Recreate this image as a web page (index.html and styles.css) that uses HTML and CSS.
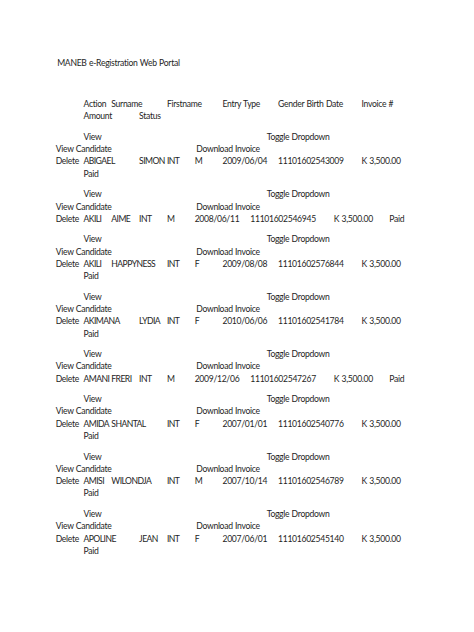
FILE: index.html
```html
<!DOCTYPE html>
<html lang="en">
<head>
<meta charset="utf-8">
<title>MANEB e-Registration Web Portal</title>
<link rel="stylesheet" href="styles.css">
</head>
<body>
<main class="doc">
  <p class="title">MANEB e-Registration Web Portal</p>

  <div class="block header">
    <div class="line"><span class="t1">Action</span><span class="t2">Surname</span><span class="t4">Firstname</span><span class="t6">Entry Type</span><span class="t8">Gender Birth Date</span><span class="t11">Invoice #</span></div>
    <div class="line"><span class="t1">Amount</span><span class="t3">Status</span></div>
  </div>

  <div class="block record">
    <div class="line"><span class="t1">View</span><span class="toggle">Toggle Dropdown</span></div>
    <div class="line"><span class="t0">View Candidate</span><span class="download">Download Invoice</span></div>
    <div class="line"><span class="t0">Delete</span><span class="t1 caps">ABIGAEL</span><span class="t3 caps">SIMON</span><span class="t4 caps">INT</span><span class="t5">M</span><span class="t6">2009/06/04</span><span class="t8">11101602543009</span><span class="t11">K 3,500.00</span></div>
    <div class="line"><span class="t1">Paid</span></div>
  </div>

  <div class="block record">
    <div class="line"><span class="t1">View</span><span class="toggle">Toggle Dropdown</span></div>
    <div class="line"><span class="t0">View Candidate</span><span class="download">Download Invoice</span></div>
    <div class="line"><span class="t0">Delete</span><span class="t1 caps">AKILI</span><span class="t2 caps">AIME</span><span class="t3 caps">INT</span><span class="t4">M</span><span class="t5">2008/06/11</span><span class="t7">11101602546945</span><span class="t10">K 3,500.00</span><span class="t12">Paid</span></div>
  </div>

  <div class="block record">
    <div class="line"><span class="t1">View</span><span class="toggle">Toggle Dropdown</span></div>
    <div class="line"><span class="t0">View Candidate</span><span class="download">Download Invoice</span></div>
    <div class="line"><span class="t0">Delete</span><span class="t1 caps">AKILI</span><span class="t2 caps">HAPPYNESS</span><span class="t4 caps">INT</span><span class="t5">F</span><span class="t6">2009/08/08</span><span class="t8">11101602576844</span><span class="t11">K 3,500.00</span></div>
    <div class="line"><span class="t1">Paid</span></div>
  </div>

  <div class="block record">
    <div class="line"><span class="t1">View</span><span class="toggle">Toggle Dropdown</span></div>
    <div class="line"><span class="t0">View Candidate</span><span class="download">Download Invoice</span></div>
    <div class="line"><span class="t0">Delete</span><span class="t1 caps">AKIMANA</span><span class="t3 caps">LYDIA</span><span class="t4 caps">INT</span><span class="t5">F</span><span class="t6">2010/06/06</span><span class="t8">11101602541784</span><span class="t11">K 3,500.00</span></div>
    <div class="line"><span class="t1">Paid</span></div>
  </div>

  <div class="block record">
    <div class="line"><span class="t1">View</span><span class="toggle">Toggle Dropdown</span></div>
    <div class="line"><span class="t0">View Candidate</span><span class="download">Download Invoice</span></div>
    <div class="line"><span class="t0">Delete</span><span class="t1 caps">AMANI</span><span class="t2 caps">FRERI</span><span class="t3 caps">INT</span><span class="t4">M</span><span class="t5">2009/12/06</span><span class="t7">11101602547267</span><span class="t10">K 3,500.00</span><span class="t12">Paid</span></div>
  </div>

  <div class="block record">
    <div class="line"><span class="t1">View</span><span class="toggle">Toggle Dropdown</span></div>
    <div class="line"><span class="t0">View Candidate</span><span class="download">Download Invoice</span></div>
    <div class="line"><span class="t0">Delete</span><span class="t1 caps">AMIDA</span><span class="t2 caps">SHANTAL</span><span class="t4 caps">INT</span><span class="t5">F</span><span class="t6">2007/01/01</span><span class="t8">11101602540776</span><span class="t11">K 3,500.00</span></div>
    <div class="line"><span class="t1">Paid</span></div>
  </div>

  <div class="block record">
    <div class="line"><span class="t1">View</span><span class="toggle">Toggle Dropdown</span></div>
    <div class="line"><span class="t0">View Candidate</span><span class="download">Download Invoice</span></div>
    <div class="line"><span class="t0">Delete</span><span class="t1 caps">AMISI</span><span class="t2 caps">WILONDJA</span><span class="t4 caps">INT</span><span class="t5">M</span><span class="t6">2007/10/14</span><span class="t8">11101602546789</span><span class="t11">K 3,500.00</span></div>
    <div class="line"><span class="t1">Paid</span></div>
  </div>

  <div class="block record">
    <div class="line"><span class="t1">View</span><span class="toggle">Toggle Dropdown</span></div>
    <div class="line"><span class="t0">View Candidate</span><span class="download">Download Invoice</span></div>
    <div class="line"><span class="t0">Delete</span><span class="t1 caps">APOLINE</span><span class="t3 caps">JEAN</span><span class="t4 caps">INT</span><span class="t5">F</span><span class="t6">2007/06/01</span><span class="t8">11101602545140</span><span class="t11">K 3,500.00</span></div>
    <div class="line"><span class="t1">Paid</span></div>
  </div>
</main>
</body>
</html>
```

FILE: styles.css
```css
html, body {
  margin: 0;
  padding: 0;
  background: #ffffff;
}

body {
  font-family: Lato, "Liberation Sans", sans-serif;
  font-size: 8.6px;
  line-height: 12.3px;
  letter-spacing: -0.3px;
  word-spacing: 0.5px;
  color: #1e1e1e;
  --tab: 27.8px;
}

.doc {
  padding: 57px 0 0 55.7px;
}

.title {
  margin: 0 0 28.3px 1.5px;
  white-space: nowrap;
}

.block {
  margin-bottom: 8.2px;
}

.header {
  margin-bottom: 8.7px;
}

.line {
  display: grid;
  grid-template-columns: repeat(15, var(--tab));
  height: 12.3px;
  white-space: nowrap;
}

.line > span {
  grid-row: 1;
}

.caps {
  letter-spacing: -0.55px;
}

.t0 { grid-column-start: 1; }
.t1 { grid-column-start: 2; }
.t2 { grid-column-start: 3; }
.t3 { grid-column-start: 4; }
.t4 { grid-column-start: 5; }
.t5 { grid-column-start: 6; }
.t6 { grid-column-start: 7; }
.t7 { grid-column-start: 8; }
.t8 { grid-column-start: 9; }
.t10 { grid-column-start: 11; }
.t11 { grid-column-start: 12; }
.t12 { grid-column-start: 13; }

.toggle {
  grid-column-start: 8;
  margin-left: 16.4px;
}

.download {
  grid-column-start: 6;
  margin-left: 1.6px;
}
```
